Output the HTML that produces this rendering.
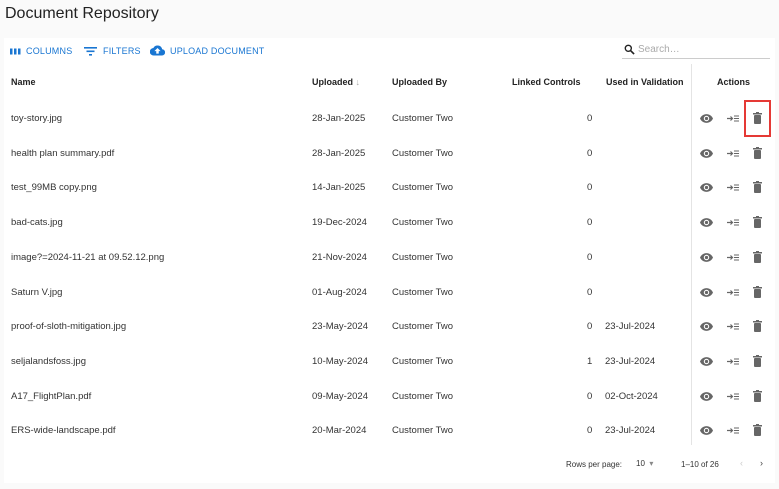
<!DOCTYPE html>
<html><head><meta charset="utf-8"><style>
*{margin:0;padding:0;box-sizing:border-box}
body{width:779px;height:489px;background:#fafafa;font-family:"Liberation Sans",sans-serif;position:relative;overflow:hidden;color:#222}
.a{position:absolute;white-space:nowrap}
h1{position:absolute;left:5px;top:5px;font-size:16px;font-weight:400;color:#222}
.card{position:absolute;left:4px;top:38px;width:771px;height:445px;background:#fff}
.tb{color:#1976d2;font-size:9px;letter-spacing:.2px}
.hd{font-size:9px;font-weight:bold;color:#222}
.c{font-size:9.5px;color:#333}
</style></head><body>
<h1>Document Repository</h1>
<div class="card"></div>
<svg class="a" style="left:10px;top:47px" width="11" height="9"><rect x="0" y="1.5" width="2.5" height="6" fill="#1976d2"/><rect x="4" y="1.5" width="2.5" height="6" fill="#1976d2"/><rect x="8" y="1.5" width="2.5" height="6" fill="#1976d2"/></svg>
<div class="a tb" style="left:26px;top:46px">COLUMNS</div>
<svg class="a" style="left:84px;top:46px" width="13" height="10"><rect x="0" y="1" width="13" height="1.6" fill="#1976d2"/><rect x="2.5" y="4.5" width="8" height="1.6" fill="#1976d2"/><rect x="5" y="8" width="3" height="1.6" fill="#1976d2"/></svg>
<div class="a tb" style="left:103px;top:46px">FILTERS</div>
<svg class="a" style="left:150px;top:45px" width="15" height="11" viewBox="0 0 24 16"><path d="M19.4 6A7.5 7.5 0 0 0 5.4 4 6 6 0 0 0 6 16h13a5 5 0 0 0 .4-10zM14 9v4h-4V9H7l5-5 5 5z" fill="#1976d2"/></svg>
<div class="a tb" style="left:170px;top:46px">UPLOAD DOCUMENT</div>
<svg class="a" style="left:624px;top:44px" width="11" height="11" viewBox="0 0 12 12"><circle cx="4.7" cy="4.7" r="3.3" fill="none" stroke="#222" stroke-width="1.5"/><path d="M7 7l4 4" stroke="#222" stroke-width="1.8"/></svg>
<div class="a" style="left:638px;top:44px;font-size:10px;color:#aaa">Search…</div>
<div class="a" style="left:622px;top:58px;width:148px;height:1px;background:#ccc"></div>
<div class="a" style="left:691px;top:64px;width:1px;height:381px;background:#e4e4e4"></div>
<div class="a hd" style="left:11px;top:77px">Name</div>
<div class="a hd" style="left:312px;top:77px">Uploaded <span style="color:#aaa;font-weight:normal">↓</span></div>
<div class="a hd" style="left:392px;top:77px">Uploaded By</div>
<div class="a hd" style="left:512px;top:77px">Linked Controls</div>
<div class="a hd" style="left:606px;top:77px">Used in Validation</div>
<div class="a hd" style="left:717px;top:77px">Actions</div>
<div id="rows"></div>
<div class="a" style="left:744px;top:100px;width:27px;height:37px;border:2px solid #e53935"></div>
<div class="a c" style="left:566px;top:460px;font-size:8px">Rows per page:</div>
<div class="a c" style="left:636px;top:459px;font-size:8px">10 &nbsp;<span style="color:#888">▾</span></div>
<div class="a c" style="left:681px;top:460px;font-size:8px">1–10 of 26</div>
<div class="a" style="left:740px;top:458px;font-size:9px;color:#ccc">‹</div>
<div class="a" style="left:760px;top:458px;font-size:9px;color:#444">›</div>
<script>
var d=[["toy-story.jpg","28-Jan-2025","0",""],["health plan summary.pdf","28-Jan-2025","0",""],["test_99MB copy.png","14-Jan-2025","0",""],["bad-cats.jpg","19-Dec-2024","0",""],["image?=2024-11-21 at 09.52.12.png","21-Nov-2024","0",""],["Saturn V.jpg","01-Aug-2024","0",""],["proof-of-sloth-mitigation.jpg","23-May-2024","0","23-Jul-2024"],["seljalandsfoss.jpg","10-May-2024","1","23-Jul-2024"],["A17_FlightPlan.pdf","09-May-2024","0","02-Oct-2024"],["ERS-wide-landscape.pdf","20-Mar-2024","0","23-Jul-2024"]];
var h="";d.forEach(function(r,i){var y=Math.round(118+i*34.7)-5;
h+='<div class="a c" style="left:11px;top:'+y+'px">'+r[0]+'</div><div class="a c" style="left:312px;top:'+y+'px">'+r[1]+'</div><div class="a c" style="left:392px;top:'+y+'px">Customer Two</div><div class="a c" style="left:587px;top:'+y+'px">'+r[2]+'</div><div class="a c" style="left:605px;top:'+y+'px">'+r[3]+'</div>';
var iy=y;
h+='<svg class="a" style="left:700px;top:'+(iy+1)+'px" width="13" height="9" viewBox="0 0 24 16"><path d="M12 0C6.5 0 2 3.5 0 8c2 4.5 6.5 8 12 8s10-3.5 12-8c-2-4.5-6.5-8-12-8zm0 13a5 5 0 1 1 0-10 5 5 0 0 1 0 10zm0-8a3 3 0 1 0 0 6 3 3 0 0 0 0-6z" fill="#666"/></svg>';
h+='<svg class="a" style="left:727px;top:'+(iy+1)+'px" width="13" height="9" viewBox="0 0 13 9"><path d="M0 4.5h5M3.5 2.5l2 2-2 2" stroke="#666" stroke-width="1.2" fill="none"/><path d="M7 2h5M7 4.5h5M7 7h5" stroke="#666" stroke-width="1"/></svg>';
h+='<svg class="a" style="left:753px;top:'+(iy-1)+'px" width="9" height="12" viewBox="0 0 9 12"><rect x="0" y="1" width="9" height="1.5" fill="#666"/><rect x="3" y="0" width="3" height="1.5" fill="#666"/><rect x="1" y="3" width="7" height="9" rx="1" fill="#666"/></svg>';});
document.getElementById("rows").innerHTML=h;
</script>
</body></html>
